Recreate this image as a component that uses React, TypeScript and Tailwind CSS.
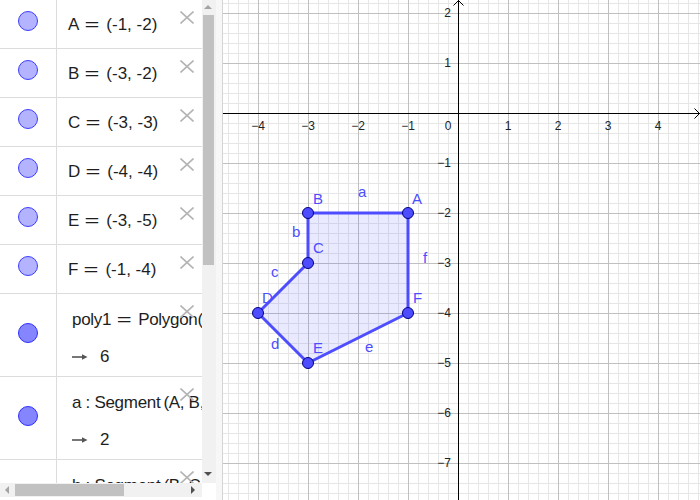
import React from "react";

const BLUE = "#4d4dff";

const points = [
  { name: "A", value: "(-1, -2)" },
  { name: "B", value: "(-3, -2)" },
  { name: "C", value: "(-3, -3)" },
  { name: "D", value: "(-4, -4)" },
  { name: "E", value: "(-3, -5)" },
  { name: "F", value: "(-1, -4)" },
];

function Cross() {
  return (
    <svg
      className="absolute right-[8px] top-[11px]"
      width="14"
      height="13"
      viewBox="0 0 14 13"
    >
      <path d="M0.5 0.5 L13.5 12.5 M13.5 0.5 L0.5 12.5" stroke="#b4b4b4" strokeWidth="1.6" fill="none" />
    </svg>
  );
}

function Equals() {
  return (
    <span className="ml-[6px] mr-[7px] inline-block w-[14px] scale-x-150 text-center">=</span>
  );
}

function PointRow({ name, value }: { name: string; value: string }) {
  return (
    <div className="flex h-[49px] border-b border-[#dcdcdc]">
      <div className="flex w-[57px] shrink-0 justify-center border-r border-[#dcdcdc] pt-[11px]">
        <div className="h-[20px] w-[20px] rounded-full border border-[#3d3dff] bg-[#b3b3ff]" />
      </div>
      <div className="relative flex-1 whitespace-nowrap pl-[11px] pt-[15px] text-[17px] leading-[20px]">
        {name}
        <Equals />
        {value}
        <Cross />
      </div>
    </div>
  );
}

function Arrow() {
  return (
    <svg width="16" height="8" viewBox="0 0 16 8" className="mr-[12px]">
      <path d="M0 4 H11" stroke="#555" strokeWidth="1.6" />
      <path d="M10 1.2 L15.5 4 L10 6.8 Z" fill="#555" />
    </svg>
  );
}

function DefRow({ children, result }: { children: React.ReactNode; result?: string }) {
  return (
    <div className="flex h-[83px] shrink-0 border-b border-[#dcdcdc]">
      <div className="flex w-[57px] shrink-0 justify-center border-r border-[#dcdcdc] pt-[29px]">
        <div className="h-[20px] w-[20px] rounded-full border border-[#2f2fff] bg-[#8585ff]" />
      </div>
      <div className="relative flex-1 overflow-hidden whitespace-nowrap pl-[15px] pt-[16px] text-[17px] leading-[20px] tracking-[-0.3px]">
        <div>{children}</div>
        {result && (
          <div className="mt-[17px] flex items-center">
            <Arrow />
            {result}
          </div>
        )}
        <Cross />
      </div>
    </div>
  );
}

function Graph() {
  const ox = 458;
  const oy = 113;
  const minorX: number[] = [];
  const majorX: number[] = [];
  for (let k = -24; k <= 25; k++) {
    const x = ox + 10 * k;
    if (k % 5 === 0) majorX.push(x);
    else minorX.push(x);
  }
  const minorY: number[] = [];
  const majorY: number[] = [];
  for (let k = -12; k <= 39; k++) {
    const y = oy + 10 * k;
    if (k % 5 === 0) majorY.push(y);
    else minorY.push(y);
  }
  const P = (x: number, y: number) => [ox + 50 * x, oy - 50 * y];
  const pts = [
    P(-1, -2),
    P(-3, -2),
    P(-3, -3),
    P(-4, -4),
    P(-3, -5),
    P(-1, -4),
  ];
  const poly = pts.map((p) => p.join(",")).join(" ");
  const labels: [string, number, number][] = [
    ["A", 412, 204],
    ["B", 313, 204],
    ["C", 313, 253],
    ["D", 262, 303],
    ["E", 313, 353],
    ["F", 413, 303],
    ["a", 358, 197],
    ["b", 292, 237],
    ["c", 271, 277],
    ["d", 271, 349],
    ["e", 365, 352],
    ["f", 423, 263],
  ];
  return (
    <svg
      width="477"
      height="500"
      viewBox="223 0 477 500"
      className="block shrink-0"
      shapeRendering="crispEdges"
    >
      <rect x="223" y="0" width="477" height="500" fill="#fff" />
      {minorX.map((x) => (
        <line key={"mx" + x} x1={x + 0.5} y1="0" x2={x + 0.5} y2="500" stroke="#e6e6e6" />
      ))}
      {minorY.map((y) => (
        <line key={"my" + y} x1="223" y1={y + 0.5} x2="700" y2={y + 0.5} stroke="#e6e6e6" />
      ))}
      {majorX.map((x) => (
        <line key={"Mx" + x} x1={x + 0.5} y1="0" x2={x + 0.5} y2="500" stroke="#c0c0c0" />
      ))}
      {majorY.map((y) => (
        <line key={"My" + y} x1="223" y1={y + 0.5} x2="700" y2={y + 0.5} stroke="#c0c0c0" />
      ))}
      <line x1="223" y1={oy + 0.5} x2="700" y2={oy + 0.5} stroke="#000" />
      <line x1={ox + 0.5} y1="0" x2={ox + 0.5} y2="500" stroke="#000" />
      <g shapeRendering="auto" fill="none" stroke="#000" strokeWidth="1">
        <path d="M453.5 5.5 L458.5 0.5 L463.5 5.5" />
        <path d="M694.5 108.5 L699.5 113.5 L694.5 118.5" />
      </g>
      <g fontFamily="'Liberation Sans', Arial, sans-serif" fontSize="12" fill="#222">
        {[-4, -3, -2, -1, 1, 2, 3, 4].map((n) => (
          <text key={"xl" + n} x={ox + 50 * n} y="130" textAnchor="middle">
            {n < 0 ? "\u2212" + -n : n}
          </text>
        ))}
        <text x="448" y="130" textAnchor="middle">
          0
        </text>
        {[2, 1, -1, -2, -3, -4, -5, -6, -7].map((n) => (
          <text key={"yl" + n} x="451" y={oy - 50 * n + 4} textAnchor="end">
            {n < 0 ? "\u2212" + -n : n}
          </text>
        ))}
      </g>
      <g shapeRendering="auto">
        <polygon points={poly} fill={BLUE} fillOpacity="0.12" stroke={BLUE} strokeWidth="3" strokeLinejoin="round" />
        {pts.map(([x, y], i) => (
          <circle key={i} cx={x} cy={y} r="5.5" fill={BLUE} stroke="#000080" strokeWidth="1" />
        ))}
        <g fontFamily="'Liberation Sans', Arial, sans-serif" fontSize="15" fill={BLUE}>
          {labels.map(([t, x, y]) => (
            <text key={t} x={x} y={y}>
              {t}
            </text>
          ))}
        </g>
      </g>
    </svg>
  );
}

export default function App() {
  return (
    <div
      className="flex h-[500px] w-[700px] overflow-hidden bg-white text-[#1e1e1e]"
      style={{ fontFamily: "'Liberation Sans', Arial, sans-serif" }}
    >
      <div className="flex w-[216px] shrink-0 flex-col">
        <div className="flex h-[483px] shrink-0 overflow-hidden">
          <div className="h-full w-[202px] overflow-hidden">
            {points.map((p) => (
              <PointRow key={p.name} name={p.name} value={p.value} />
            ))}
            <DefRow result="6">
              poly1
              <Equals />
              Polygon(A, B, C, D, E, F)
            </DefRow>
            <DefRow result="2">
              a : Segment<span className="ml-[3px]">(A, B, poly1)</span>
            </DefRow>
            <DefRow>
              b : Segment<span className="ml-[3px]">(B, C, poly1)</span>
            </DefRow>
          </div>
          <div className="relative w-[14px] bg-[#f1f1f1]">
            <div className="absolute left-[2px] top-[5px] h-0 w-0 border-x-[4px] border-b-[4px] border-x-transparent border-b-[#a3a3a3]" />
            <div className="absolute left-[1px] top-[15px] h-[250px] w-[11px] bg-[#c1c1c1]" />
            <div className="absolute left-[2px] top-[472px] h-0 w-0 border-x-[4px] border-t-[4px] border-x-transparent border-t-[#505050]" />
          </div>
        </div>
        <div className="relative z-10 flex h-[14px] shrink-0">
          <div className="relative w-[202px] bg-[#f1f1f1]">
            <div className="absolute left-[5px] top-[3px] h-0 w-0 border-y-[4px] border-r-[4px] border-y-transparent border-r-[#a3a3a3]" />
            <div className="absolute left-[15px] top-[1px] h-[12px] w-[109px] bg-[#c1c1c1]" />
            <div className="absolute left-[191px] top-[3px] h-0 w-0 border-y-[4px] border-l-[4px] border-y-transparent border-l-[#505050]" />
          </div>
        </div>
      </div>
      <div className="w-[7px] shrink-0 border-r border-[#d4d4d4] bg-[#f7f7f7]" />
      <Graph />
    </div>
  );
}
